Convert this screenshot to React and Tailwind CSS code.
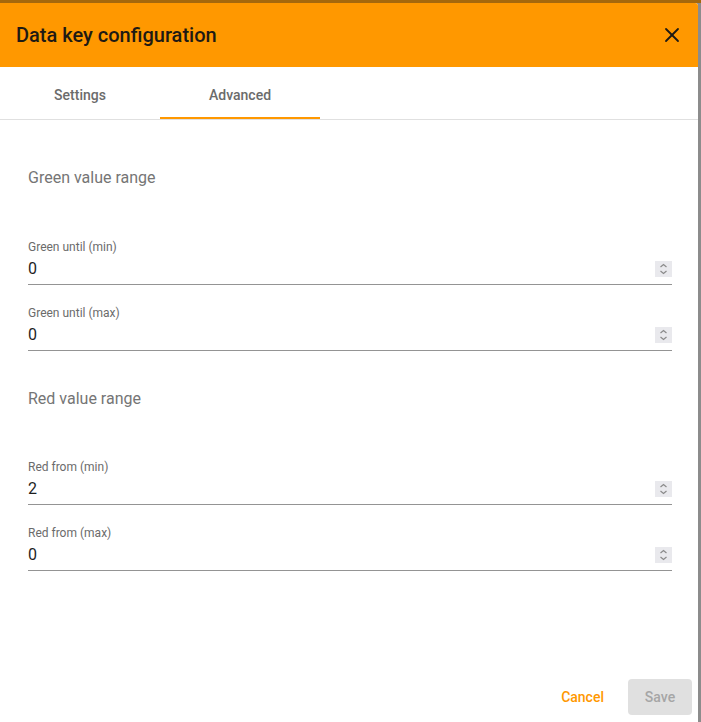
import { X } from 'lucide-react';

const fields = [
  {
    title: 'Green value range',
    pad: 'pt-[46px]',
    gap: 'mt-[49px]',
    items: [
      { label: 'Green until (min)', value: '0' },
      { label: 'Green until (max)', value: '0' },
    ],
  },
  {
    title: 'Red value range',
    pad: 'pt-[36px]',
    gap: 'mt-[48px]',
    items: [
      { label: 'Red from (min)', value: '2' },
      { label: 'Red from (max)', value: '0' },
    ],
  },
];

function Spinner() {
  return (
    <div className="w-[17px] h-[16px] bg-[#e9e9ed] flex items-center justify-center">
      <svg width="9" height="12" viewBox="0 0 9 12" fill="none" stroke="#8a8a8a" strokeWidth="1.2">
        <path d="M1.5 4 L4.5 1.5 L7.5 4" />
        <path d="M1.5 8 L4.5 10.5 L7.5 8" />
      </svg>
    </div>
  );
}

function NumberField({ label, value }) {
  return (
    <div className="border-b border-[#949494] pb-[3px]">
      <div className="text-[12px] leading-[16px] text-[#6b6b6b]">{label}</div>
      <div className="mt-[2px] flex items-center justify-between h-[24px]">
        <span className="text-[16px] leading-[24px] text-[#1f1f1f]">{value}</span>
        <Spinner />
      </div>
    </div>
  );
}

export default function App() {
  return (
    <div
      className="w-[701px] h-[722px] bg-[#8c8c8c] overflow-hidden flex flex-col"
      style={{ fontFamily: 'Roboto, "Liberation Sans", sans-serif' }}
    >
      <div className="h-[3px] bg-[#a5680c] shrink-0" />
      <div className="w-[698px] flex-1 bg-white flex flex-col rounded-tr-[3px] overflow-hidden">
        {/* Header */}
        <div className="h-[64px] bg-[#ff9800] flex items-center justify-between pl-[16px] pr-[14px] shrink-0">
          <h2 className="text-[20px] font-medium text-[#1e1a14]">Data key configuration</h2>
          <X size={24} strokeWidth={1.8} color="#1e1a14" />
        </div>

        {/* Tabs */}
        <div className="h-[53px] border-b border-[#e0e0e0] flex shrink-0">
          <div className="w-[160px] pt-[4px] flex items-center justify-center text-[14px] font-medium text-[#6b6b6b]">
            Settings
          </div>
          <div className="w-[160px] pt-[4px] flex items-center justify-center text-[14px] font-medium text-[#6b6b6b] relative">
            Advanced
            <div className="absolute left-0 right-0 bottom-0 h-[2px] bg-[#ff9800]" />
          </div>
        </div>

        {/* Content */}
        <div className="flex-1 pl-[28px] pr-[26px]">
          {fields.map((section) => (
            <div key={section.title} className={section.pad}>
              <div className="text-[16px] leading-[24px] text-[#757575]">{section.title}</div>
              <div className={`${section.gap} flex flex-col gap-[20px]`}>
                {section.items.map((f) => (
                  <NumberField key={f.label} label={f.label} value={f.value} />
                ))}
              </div>
            </div>
          ))}
        </div>

        {/* Footer */}
        <div className="flex items-center justify-end gap-[8px] pr-[6px] pb-[7px] shrink-0">
          <button className="h-[36px] px-[16px] text-[14px] font-medium text-[#ff9800] rounded">Cancel</button>
          <button className="h-[36px] w-[64px] text-[14px] font-medium text-[#a6a6a6] bg-[#e0e0e0] rounded-[4px]">
            Save
          </button>
        </div>
      </div>
    </div>
  );
}
